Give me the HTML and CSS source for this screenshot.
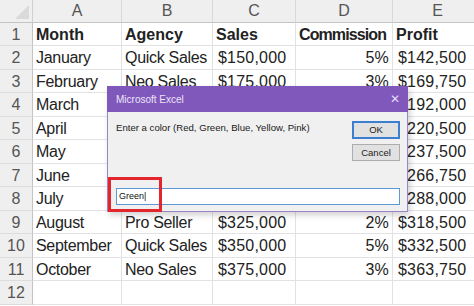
FILE: index.html
```html
<!DOCTYPE html>
<html lang="en">
<head>
  <meta charset="UTF-8" />
  <title>Input box</title>
  <link rel="stylesheet" href="styles.css">
</head>
<body>
  <div class="sheet">
    <div class="corner"></div>
    <div class="col-head">A</div>
    <div class="col-head">B</div>
    <div class="col-head">C</div>
    <div class="col-head">D</div>
    <div class="col-head">E</div>

    <div class="row-head">1</div>
    <div class="cell bold">Month</div>
    <div class="cell bold">Agency</div>
    <div class="cell bold">Sales</div>
    <div class="cell bold narrow">Commission</div>
    <div class="cell bold">Profit</div>

    <div class="row-head">2</div>
    <div class="cell">January</div>
    <div class="cell">Quick Sales</div>
    <div class="cell num">$150,000</div>
    <div class="cell pct">5%</div>
    <div class="cell num">$142,500</div>

    <div class="row-head">3</div>
    <div class="cell">February</div>
    <div class="cell">Neo Sales</div>
    <div class="cell num">$175,000</div>
    <div class="cell pct">3%</div>
    <div class="cell num">$169,750</div>

    <div class="row-head">4</div>
    <div class="cell">March</div>
    <div class="cell">Pro Seller</div>
    <div class="cell num">$200,000</div>
    <div class="cell pct">4%</div>
    <div class="cell num">$192,000</div>

    <div class="row-head">5</div>
    <div class="cell">April</div>
    <div class="cell">Quick Sales</div>
    <div class="cell num">$225,000</div>
    <div class="cell pct">2%</div>
    <div class="cell num">$220,500</div>

    <div class="row-head">6</div>
    <div class="cell">May</div>
    <div class="cell">Neo Sales</div>
    <div class="cell num">$250,000</div>
    <div class="cell pct">5%</div>
    <div class="cell num">$237,500</div>

    <div class="row-head">7</div>
    <div class="cell">June</div>
    <div class="cell">Pro Seller</div>
    <div class="cell num">$275,000</div>
    <div class="cell pct">3%</div>
    <div class="cell num">$266,750</div>

    <div class="row-head">8</div>
    <div class="cell">July</div>
    <div class="cell">Quick Sales</div>
    <div class="cell num">$300,000</div>
    <div class="cell pct">4%</div>
    <div class="cell num">$288,000</div>

    <div class="row-head">9</div>
    <div class="cell">August</div>
    <div class="cell">Pro Seller</div>
    <div class="cell num">$325,000</div>
    <div class="cell pct">2%</div>
    <div class="cell num">$318,500</div>

    <div class="row-head">10</div>
    <div class="cell">September</div>
    <div class="cell">Quick Sales</div>
    <div class="cell num">$350,000</div>
    <div class="cell pct">5%</div>
    <div class="cell num">$332,500</div>

    <div class="row-head">11</div>
    <div class="cell">October</div>
    <div class="cell">Neo Sales</div>
    <div class="cell num">$375,000</div>
    <div class="cell pct">3%</div>
    <div class="cell num">$363,750</div>

    <div class="row-head">12</div>
    <div class="cell"></div>
    <div class="cell"></div>
    <div class="cell"></div>
    <div class="cell"></div>
    <div class="cell"></div>
  </div>

  <div class="dialog">
    <div class="dialog-title">
      <span>Microsoft Excel</span>
      <span class="close">&#x2715;</span>
    </div>
    <div class="dialog-body">
      <div class="dialog-top">
        <div class="prompt">Enter a color (Red, Green, Blue, Yellow, Pink)</div>
        <div class="buttons">
          <div class="btn btn-default">OK</div>
          <div class="btn">Cancel</div>
        </div>
      </div>
      <div class="input-box">Green<span class="caret">|</span></div>
    </div>
  </div>

  <div class="highlight"></div>
</body>
</html>
```

FILE: styles.css
```css
body {
  margin: 0;
  width: 474px;
  height: 306px;
  overflow: hidden;
  position: relative;
  background: #ffffff;
  font-family: "Liberation Sans", Arial, sans-serif;
}

.sheet {
  display: grid;
  grid-template-columns: 33px 89px 91px 83px 97px 90px;
  grid-template-rows: 22.5px repeat(12, 23.5px);
  color: #222222;
  font-size: 16px;
}

.corner {
  background: #efefef;
  border-right: 1px solid #d0d0d0;
  border-bottom: 1px solid #c4c4c4;
  position: relative;
}

.corner::after {
  content: "";
  position: absolute;
  right: 3px;
  bottom: 3px;
  border-left: 14px solid transparent;
  border-bottom: 14px solid #dadada;
}

.col-head {
  background: #efefef;
  color: #555555;
  text-align: center;
  line-height: 22px;
  border-right: 1px solid #d8d8d8;
  border-bottom: 1px solid #c4c4c4;
}

.row-head {
  background: #efefef;
  color: #555555;
  text-align: center;
  line-height: 23px;
  border-right: 1px solid #c4c4c4;
  border-bottom: 1px solid #dcdcdc;
}

.cell {
  padding: 0 3px;
  line-height: 23px;
  letter-spacing: -0.3px;
  white-space: nowrap;
  overflow: hidden;
  border-right: 1px solid #e2e2e2;
  border-bottom: 1px solid #e2e2e2;
}

.bold {
  font-weight: bold;
  letter-spacing: 0;
}

.narrow {
  letter-spacing: -0.9px;
}

.num {
  padding-left: 5px;
  letter-spacing: 0.2px;
}

.pct {
  text-align: right;
  letter-spacing: 0.2px;
}

.dialog {
  position: absolute;
  left: 107px;
  top: 86px;
  width: 301px;
  height: 126px;
  box-sizing: border-box;
  background: #f0f0f0;
  border: 1px solid #9b86c4;
  border-top: none;
  box-shadow: 2px 3px 6px rgba(0, 0, 0, 0.18);
  display: flex;
  flex-direction: column;
  font-family: "Liberation Sans", Arial, sans-serif;
}

.dialog-title {
  height: 26px;
  margin: 0 -1px;
  padding: 0 8px 0 9px;
  background: #8058bc;
  color: #ece4f7;
  font-size: 10px;
  display: flex;
  align-items: center;
  justify-content: space-between;
}

.close {
  font-size: 12px;
  font-weight: 300;
  color: #e6dcf5;
}

.dialog-body {
  flex: 1;
  padding: 9px 7px 6px 8px;
  display: flex;
  flex-direction: column;
}

.dialog-top {
  display: flex;
  justify-content: space-between;
}

.prompt {
  font-size: 9.6px;
  color: #1a1a1a;
  margin-top: 1px;
}

.buttons {
  display: flex;
  flex-direction: column;
  gap: 5px;
}

.btn {
  width: 48px;
  height: 17px;
  box-sizing: border-box;
  background: #e1e1e1;
  border: 1px solid #adadad;
  font-size: 9.5px;
  color: #222222;
  text-align: center;
  line-height: 15px;
}

.btn-default {
  border: 2px solid #3c7fd0;
  line-height: 13px;
  height: 18px;
}

.input-box {
  margin-top: auto;
  height: 17px;
  box-sizing: border-box;
  background: #ffffff;
  border: 1px solid #5b9ad8;
  font-size: 9px;
  line-height: 15px;
  padding-left: 2px;
  color: #111111;
}

.highlight {
  position: absolute;
  left: 108px;
  top: 177px;
  width: 54px;
  height: 35px;
  box-sizing: border-box;
  border: 3px solid #e3262b;
}
```
